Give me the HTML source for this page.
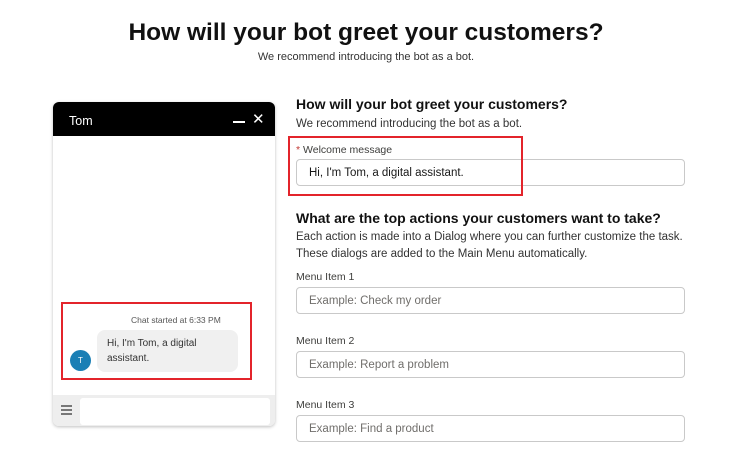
<!DOCTYPE html>
<html><head><style>
*{box-sizing:border-box;margin:0;padding:0}
body{width:750px;height:459px;background:#fff;font-family:"Liberation Sans",sans-serif;color:#181818;position:relative;overflow:hidden}
.a{position:absolute;white-space:nowrap}
.inp{position:absolute;left:296px;width:389px;height:27px;border:1px solid #c9c9c9;border-radius:4px;font-size:11.5px;padding:7px 12px;color:#706e6b}
.lab{position:absolute;left:296px;font-size:10.5px;color:#3e3e3c}
.red{position:absolute;border:2px solid #e3242b}
</style></head><body>
<div class="a" style="left:0;width:732px;text-align:center;top:19px;font-size:24.5px;font-weight:bold;color:#111">How will your bot greet your customers?</div>
<div class="a" style="left:0;width:732px;text-align:center;top:51px;font-size:11px;color:#333">We recommend introducing the bot as a bot.</div>

<div class="a" style="left:53px;top:102px;width:222px;height:324px;border-radius:6px;box-shadow:0 1px 3px rgba(0,0,0,.25);background:#fff;overflow:hidden">
 <div style="height:34px;background:#000;color:#fff;font-size:12.5px;padding:12px 0 0 16px;position:relative">Tom
  <div style="position:absolute;left:180px;top:19px;width:12px;height:2px;background:#fff"></div>
  <div style="position:absolute;left:199px;top:8px;font-size:15px">✕</div>
 </div>
 <div style="position:absolute;top:293px;left:0;width:222px;height:31px;background:#eeeeee">
  <div style="position:absolute;left:8px;top:10px;width:11px;height:2px;background:#777;box-shadow:0 4px 0 #777,0 8px 0 #777"></div>
  <div style="position:absolute;left:27px;top:3px;width:190px;height:27px;background:#fff;border-radius:3px"></div>
 </div>
 <div class="a" style="left:78px;top:213px;font-size:8.5px;color:#555">Chat started at 6:33 PM</div>
 <div class="a" style="left:44px;top:228px;width:141px;height:42px;background:#f0f0f0;border-radius:8px;font-size:10px;line-height:15px;padding:6px 10px;white-space:normal;color:#333">Hi, I'm Tom, a digital assistant.</div>
 <div class="a" style="left:17px;top:248px;width:21px;height:21px;border-radius:50%;background:#1a7fb5;color:#fff;font-size:8px;text-align:center;line-height:21px">T</div>
</div>
<div class="red" style="left:61px;top:302px;width:191px;height:78px"></div>

<div class="a" style="left:296px;top:96px;font-size:14px;font-weight:bold;color:#111">How will your bot greet your customers?</div>
<div class="a" style="left:296px;top:118px;font-size:11.5px;color:#333">We recommend introducing the bot as a bot.</div>
<div class="lab" style="top:144px"><span style="color:#c23934">*</span> Welcome message</div>
<div class="inp" style="top:159px;color:#181818">Hi, I'm Tom, a digital assistant.</div>
<div class="red" style="left:288px;top:136px;width:235px;height:60px"></div>

<div class="a" style="left:296px;top:210px;font-size:14px;font-weight:bold;color:#111">What are the top actions your customers want to take?</div>
<div class="a" style="left:296px;top:229px;font-size:11.5px;color:#333;line-height:17px">Each action is made into a Dialog where you can further customize the task.<br>These dialogs are added to the Main Menu automatically.</div>
<div class="lab" style="top:271px">Menu Item 1</div>
<div class="inp" style="top:287px">Example: Check my order</div>
<div class="lab" style="top:335px">Menu Item 2</div>
<div class="inp" style="top:351px">Example: Report a problem</div>
<div class="lab" style="top:399px">Menu Item 3</div>
<div class="inp" style="top:415px">Example: Find a product</div>
</body></html>
